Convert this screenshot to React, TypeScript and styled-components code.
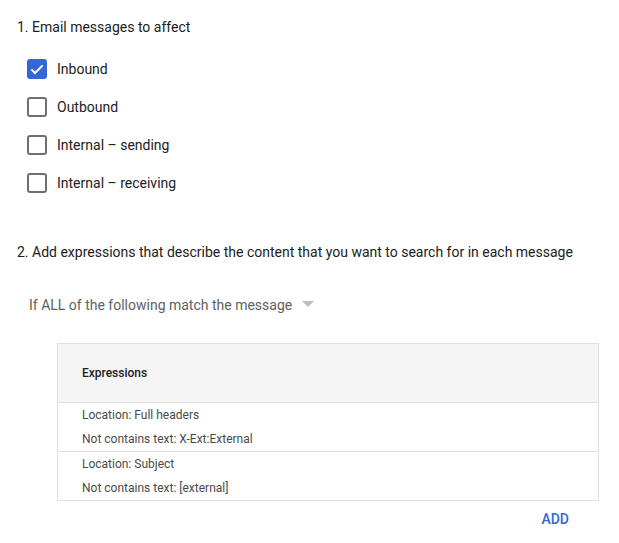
import React from 'react'
import styled, { createGlobalStyle } from 'styled-components'

const GlobalStyle = createGlobalStyle`
  html, body {
    margin: 0;
    padding: 0;
    background: #fff;
  }
  body {
    font-family: Roboto, "Noto Sans", Arial, sans-serif;
    color: #212121;
    -webkit-font-smoothing: antialiased;
  }
`

const Page = styled.div`
  width: 619px;
  padding: 17px 0 0 17px;
  box-sizing: border-box;
`

const SectionTitle = styled.div`
  font-size: 14px;
  line-height: 20px;
  color: #212121;
`

const CheckList = styled.div`
  display: flex;
  flex-direction: column;
  gap: 18px;
  padding: 22px 0 0 10px;
`

const CheckRow = styled.label`
  display: flex;
  align-items: center;
  gap: 10px;
  font-size: 14px;
  color: #212121;
  height: 20px;
`

const Box = styled.span<{ $checked?: boolean }>`
  width: 20px;
  height: 20px;
  box-sizing: border-box;
  border-radius: 3px;
  display: flex;
  align-items: center;
  justify-content: center;
  border: 2px solid ${p => (p.$checked ? '#3367d6' : '#6e6e6e')};
  background: ${p => (p.$checked ? '#3367d6' : 'transparent')};
`

const Section2 = styled.div`
  padding-top: 49px;
`

const MatchSelect = styled.div`
  display: flex;
  align-items: center;
  gap: 10px;
  margin: 33px 0 0 12px;
  font-size: 14px;
  color: #616161;
  height: 20px;
`

const Arrow = styled.span`
  width: 0;
  height: 0;
  border-left: 6px solid transparent;
  border-right: 6px solid transparent;
  border-top: 6px solid #bdbdbd;
  margin-top: -3px;
`

const Table = styled.div`
  margin: 28px 0 0 40px;
  width: 542px;
  border: 1px solid #e0e0e0;
  box-sizing: border-box;
`

const TableHead = styled.div`
  height: 58px;
  background: #f5f5f5;
  display: flex;
  align-items: center;
  padding-left: 24px;
  font-size: 12px;
  font-weight: 500;
  color: #212121;
  border-bottom: 1px solid #e0e0e0;
`

const TableRow = styled.div`
  display: flex;
  flex-direction: column;
  padding: 0 24px;
  height: 48px;
  box-sizing: border-box;
  & + & {
    border-top: 1px solid #e0e0e0;
    height: 49px;
  }
`

const RowLine = styled.div`
  font-size: 12px;
  line-height: 24px;
  color: #4a4a4a;
`

const Actions = styled.div`
  width: 542px;
  margin-left: 40px;
  display: flex;
  justify-content: flex-end;
  padding: 8px 30px 0 0;
  box-sizing: border-box;
`

const AddButton = styled.button`
  background: none;
  border: none;
  padding: 0;
  font-family: inherit;
  font-size: 14px;
  font-weight: 500;
  color: #3367d6;
  line-height: 20px;
  cursor: pointer;
`

const Check = () => (
  <svg width="16" height="16" viewBox="0 0 24 24">
    <path d="M3.5 12.5l5.5 5.5L20.5 6.5" fill="none" stroke="#fff" strokeWidth="3" />
  </svg>
)

const options = [
  { label: 'Inbound', checked: true },
  { label: 'Outbound', checked: false },
  { label: 'Internal – sending', checked: false },
  { label: 'Internal – receiving', checked: false },
]

const expressions = [
  ['Location: Full headers', 'Not contains text: X-Ext:External'],
  ['Location: Subject', 'Not contains text: [external]'],
]

export default function App() {
  return (
    <>
      <GlobalStyle />
      <Page>
        <SectionTitle>1. Email messages to affect</SectionTitle>
        <CheckList>
          {options.map(o => (
            <CheckRow key={o.label}>
              <Box $checked={o.checked}>{o.checked && <Check />}</Box>
              {o.label}
            </CheckRow>
          ))}
        </CheckList>
        <Section2>
          <SectionTitle>
            2. Add expressions that describe the content that you want to search for in each message
          </SectionTitle>
        </Section2>
        <MatchSelect>
          If ALL of the following match the message
          <Arrow />
        </MatchSelect>
        <Table>
          <TableHead>Expressions</TableHead>
          {expressions.map(lines => (
            <TableRow key={lines[0]}>
              {lines.map(l => (
                <RowLine key={l}>{l}</RowLine>
              ))}
            </TableRow>
          ))}
        </Table>
        <Actions>
          <AddButton>ADD</AddButton>
        </Actions>
      </Page>
    </>
  )
}
